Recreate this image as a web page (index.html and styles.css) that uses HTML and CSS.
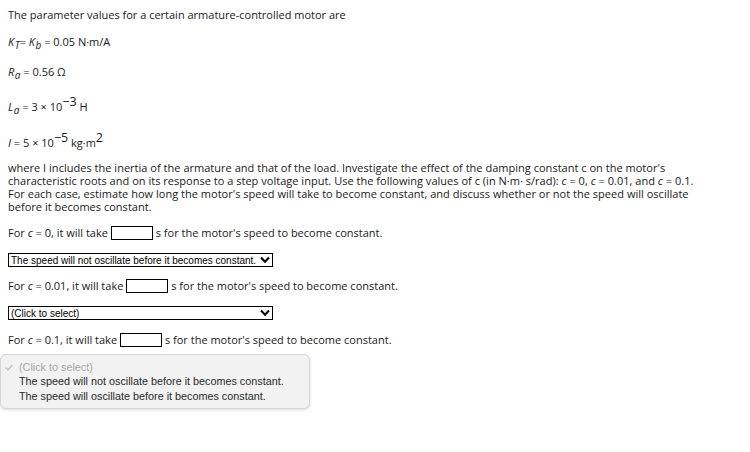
FILE: index.html
```html
<!DOCTYPE html>
<html>
<head>
<meta charset="utf-8">
<link rel="stylesheet" href="styles.css">
</head>
<body>
<div class="page">
  <p class="line l-intro">The parameter values for a certain armature-controlled motor are</p>
  <p class="line l-k"><i>K<sub>T</sub></i>= <i>K<sub>b</sub></i> = 0.05 N·m/A</p>
  <p class="line l-r"><i>R<sub>a</sub></i> = 0.56 Ω</p>
  <p class="line l-l"><i>L<sub>a</sub></i> = 3 × 10<sup>−3</sup> H</p>
  <p class="line l-i"><i>I</i> = 5 × 10<sup>−5</sup> kg·m<sup>2</sup></p>
  <p class="para">where I includes the inertia of the armature and that of the load. Investigate the effect of the damping constant c on the motor's<br>characteristic roots and on its response to a step voltage input. Use the following values of c (in N·m· s/rad): <i>c</i> = 0, <i>c</i> = 0.01, and <i>c</i> = 0.1.<br>For each case, estimate how long the motor's speed will take to become constant, and discuss whether or not the speed will oscillate<br>before it becomes constant.</p>

  <p class="line q q1">For <i>c</i> = 0, it will take <span class="box"></span>s for the motor's speed to become constant.</p>
  <div class="select sel1"><span>The speed will not oscillate before it becomes constant.</span><svg class="chev" viewBox="0 0 10 8" width="10" height="8"><path d="M1 1.5 L5 5.8 L9 1.5" fill="none" stroke="#000" stroke-width="2"/></svg></div>

  <p class="line q q2">For <i>c</i> = 0.01, it will take <span class="box"></span>s for the motor's speed to become constant.</p>
  <div class="select sel2"><span>(Click to select)</span><svg class="chev" viewBox="0 0 10 8" width="10" height="8"><path d="M1 1.5 L5 5.8 L9 1.5" fill="none" stroke="#000" stroke-width="2"/></svg></div>

  <p class="line q q3">For <i>c</i> = 0.1, it will take <span class="box"></span>s for the motor's speed to become constant.</p>
  <div class="select-wrap">
    <div class="menu">
      <div class="opt opt-disabled"><svg class="check" viewBox="0 0 10 8" width="8" height="7"><path d="M1 4.2 L3.8 7 L9 1" fill="none" stroke="#b5b5b5" stroke-width="1.4"/></svg>(Click to select)</div>
      <div class="opt">The speed will not oscillate before it becomes constant.</div>
      <div class="opt">The speed will oscillate before it becomes constant.</div>
    </div>
  </div>
</div>
</body>
</html>
```
FILE: styles.css
```css
html, body {
  margin: 0;
  padding: 0;
  background: #fff;
}
body {
  padding: 8px;
  min-height: 436px;
  font-family: "Open Sans", "Liberation Sans", sans-serif;
  font-size: 11px;
  color: #1a1a1a;
}
.page {
  display: flex;
  flex-direction: column;
  align-items: flex-start;
}
p { margin: 0; }
.line {
  line-height: 13px;
  white-space: nowrap;
}
i { font-style: italic; }
sub, sup {
  line-height: 0;
  position: relative;
  vertical-align: baseline;
}
sub { font-size: 10px; top: 3px; margin-left: 0.5px; }
sup { font-size: 12.5px; top: -5px; }

.l-intro { margin-top: 0; }
.l-k { margin-top: 13.5px; }
.l-r { margin-top: 17px; }
.l-l { margin-top: 22px; }
.l-i { margin-top: 23px; }
.para {
  margin-top: 12px;
  line-height: 13.3px;
  white-space: nowrap;
  letter-spacing: 0.02px;
}
.q1 { margin-top: 12px; }
.sel1 { margin-top: 13.5px; }
.q2 { margin-top: 11.5px; }
.sel2 { margin-top: 13.5px; }
.q3 { margin-top: 12.5px; }
.select-wrap {
  margin-top: 7px;
  position: relative;
  width: 265px;
  height: 54px;
}

.box {
  display: inline-block;
  width: 40px;
  height: 12px;
  border: 1px solid #000;
  vertical-align: -3px;
  margin: 0 3px 0 0;
  background: #fff;
}

.select {
  box-sizing: border-box;
  width: 265px;
  height: 14px;
  border: 1px solid #000;
  display: flex;
  align-items: center;
  justify-content: space-between;
  padding: 0 2px 0 2px;
  font-family: "Liberation Sans", Arial, sans-serif;
  font-size: 10px;
  color: #000;
  background: #fff;
}
.chev { display: block; }

.menu {
  position: absolute;
  left: -8px;
  top: 0;
  width: 310px;
  height: 55px;
  box-sizing: border-box;
  border: 1px solid #d6d6d6;
  border-radius: 6px;
  background: #f2f2f2;
  box-shadow: 0 1px 3px rgba(0,0,0,0.14);
  padding-top: 5px;
  font-family: "Liberation Sans", Arial, sans-serif;
  font-size: 10.8px;
  color: #2a2a2a;
}
.opt {
  position: relative;
  height: 14.5px;
  line-height: 14.5px;
  padding-left: 18px;
  white-space: nowrap;
}
.opt-disabled { color: #a8a8a8; }
.check {
  position: absolute;
  left: 4px;
  top: 4px;
}
```
